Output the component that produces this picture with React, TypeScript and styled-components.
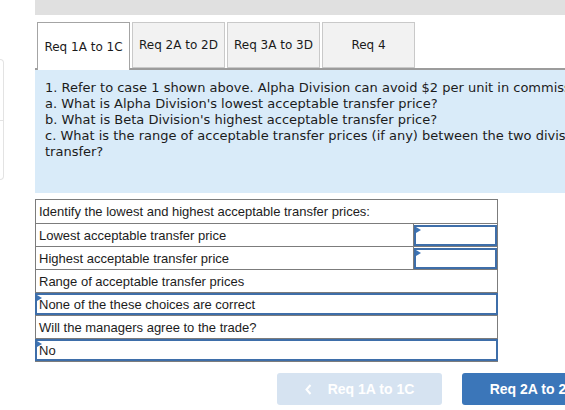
import React from "react";
import styled, { createGlobalStyle } from "styled-components";

const Global = createGlobalStyle`
  html, body { margin: 0; padding: 0; background: #fff; overflow: hidden; }
  body { width: 565px; height: 410px; }
`;

const Page = styled.div`
  display: flex;
  width: 565px;
  height: 410px;
  overflow: hidden;
`;

const SideStrip = styled.div`
  width: 35px;
  flex: none;
  padding-top: 59px;
  box-sizing: border-box;
`;

const SideCard = styled.div`
  width: 4px;
  box-sizing: border-box;
  border: 1px solid #e3e3e3;
  border-left: none;
  border-radius: 0 4px 4px 0;
  display: flex;
  flex-direction: column;
`;

const SideCell = styled.div<{ $h: number }>`
  height: ${(p) => p.$h}px;
  & + & { border-top: 1px solid #e3e3e3; }
`;

const Main = styled.div`
  flex: none;
  width: 700px;
  display: flex;
  flex-direction: column;
`;

const TopBar = styled.div`
  height: 15px;
  background: #e0e0e0;
`;

const TabRow = styled.div`
  display: flex;
  gap: 2px;
  padding-left: 2px;
  margin-top: 7px;
  border-bottom: 2px solid #9c9c9c;
  height: 46px;
`;

const Tab = styled.div<{ $active?: boolean }>`
  width: 93px;
  box-sizing: border-box;
  height: ${(p) => (p.$active ? 48 : 46)}px;
  display: flex;
  align-items: center;
  justify-content: center;
  font-family: "DejaVu Sans", Verdana, sans-serif;
  font-size: 12px;
  color: #1a1a1a;
  background: ${(p) => (p.$active ? "#fff" : "#f2f2f2")};
  border: 1px solid ${(p) => (p.$active ? "#a4a4a4" : "#c9c9c9")};
  border-bottom: ${(p) => (p.$active ? "none" : "1px solid #c9c9c9")};
  position: relative;
  z-index: 1;
`;

const Question = styled.div`
  background: #d9ebf9;
  height: 123px;
  box-sizing: border-box;
  padding: 10px 10px 0 10px;
  font-family: "DejaVu Sans", Verdana, sans-serif;
  font-size: 13px;
  line-height: 16px;
  color: #1c1c1c;
`;

const QLine = styled.div`
  white-space: nowrap;
`;

const Table = styled.div`
  margin-top: 6px;
  width: 463px;
  box-sizing: border-box;
  border: 1px solid #7c7c7c;
  display: flex;
  flex-direction: column;
  font-family: "Liberation Sans", Arial, sans-serif;
  font-size: 13px;
  color: #1c1c1c;
`;

const Row = styled.div`
  display: flex;
  height: 23px;
  box-sizing: border-box;
  & + & { border-top: 1px solid #7c7c7c; }
`;

const Label = styled.div`
  flex: 1;
  display: flex;
  align-items: center;
  padding-left: 3px;
  white-space: nowrap;
`;

const Marker = styled.span`
  position: absolute;
  left: 0;
  top: 0;
  width: 0;
  height: 0;
  border-top: 3px solid transparent;
  border-bottom: 3px solid transparent;
  border-left: 5px solid #3d74b5;
`;

const InputCell = styled.div`
  width: 84px;
  flex: none;
  border-left: 1px solid #7c7c7c;
  padding: 1px 0 0 0;
  box-sizing: border-box;
  display: flex;
`;

const InputBox = styled.div`
  flex: 1;
  border: 2px solid #3e6ea9;
  position: relative;
  background: #fff;
`;

const SelectBox = styled.div`
  flex: 1;
  display: flex;
  align-items: center;
  padding-left: 2px;
  border: 2px solid #3e6ea9;
  margin: 0 -1px 0 -1px;
  position: relative;
  background: #fff;
  white-space: nowrap;
`;

const ButtonRow = styled.div`
  display: flex;
  gap: 20px;
  padding-left: 242px;
  margin-top: 11px;
`;

const NavButton = styled.div<{ $primary?: boolean }>`
  width: 165px;
  height: 32px;
  flex: none;
  box-sizing: border-box;
  border-radius: 3px;
  background: ${(p) => (p.$primary ? "#3b76b9" : "#d6e3f1")};
  color: #fff;
  font-family: "Liberation Sans", Arial, sans-serif;
  font-weight: bold;
  font-size: 14px;
  display: flex;
  align-items: center;
  justify-content: center;
  gap: 16px;
`;

const Chevron = ({ dir }: { dir: "left" | "right" }) => (
  <svg width="7" height="11" viewBox="0 0 7 11">
    <path
      d={dir === "left" ? "M5.5 1 L1.5 5.5 L5.5 10" : "M1.5 1 L5.5 5.5 L1.5 10"}
      stroke="#fff"
      strokeWidth="2"
      fill="none"
    />
  </svg>
);

export default function App() {
  return (
    <>
      <Global />
      <Page>
        <SideStrip>
          <SideCard>
            <SideCell $h={60} />
            <SideCell $h={58} />
          </SideCard>
        </SideStrip>
        <Main>
          <TopBar />
          <TabRow>
            <Tab $active>Req 1A to 1C</Tab>
            <Tab>Req 2A to 2D</Tab>
            <Tab>Req 3A to 3D</Tab>
            <Tab>Req 4</Tab>
          </TabRow>
          <Question>
            <QLine>1. Refer to case 1 shown above. Alpha Division can avoid $2 per unit in commissions on any sales to Beta Division.</QLine>
            <QLine>a. What is Alpha Division's lowest acceptable transfer price?</QLine>
            <QLine>b. What is Beta Division's highest acceptable transfer price?</QLine>
            <QLine>c. What is the range of acceptable transfer prices (if any) between the two divisions? Will the managers agree to the</QLine>
            <QLine>transfer?</QLine>
          </Question>
          <Table>
            <Row>
              <Label>Identify the lowest and highest acceptable transfer prices:</Label>
            </Row>
            <Row>
              <Label>Lowest acceptable transfer price</Label>
              <InputCell>
                <InputBox>
                  <Marker />
                </InputBox>
              </InputCell>
            </Row>
            <Row>
              <Label>Highest acceptable transfer price</Label>
              <InputCell>
                <InputBox>
                  <Marker />
                </InputBox>
              </InputCell>
            </Row>
            <Row>
              <Label>Range of acceptable transfer prices</Label>
            </Row>
            <Row>
              <SelectBox>
                <Marker />
                None of the these choices are correct
              </SelectBox>
            </Row>
            <Row>
              <Label>Will the managers agree to the trade?</Label>
            </Row>
            <Row>
              <SelectBox>
                <Marker />
                No
              </SelectBox>
            </Row>
          </Table>
          <ButtonRow>
            <NavButton>
              <Chevron dir="left" />
              Req 1A to 1C
            </NavButton>
            <NavButton $primary>
              Req 2A to 2D
              <Chevron dir="right" />
            </NavButton>
          </ButtonRow>
        </Main>
      </Page>
    </>
  );
}
